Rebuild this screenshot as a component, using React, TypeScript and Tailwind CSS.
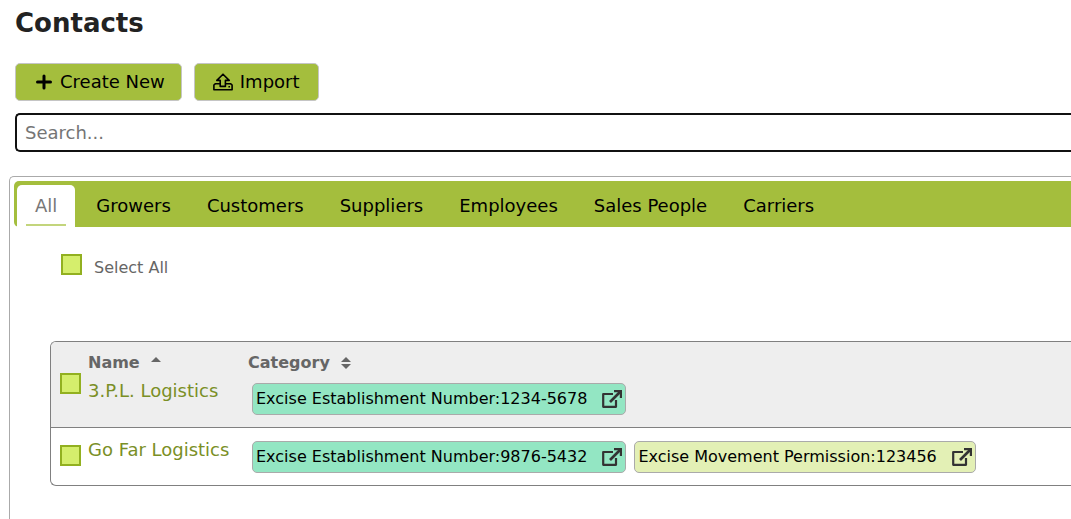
import { useState } from 'react'

type Tag = {
  label: string
  tone:  'establishment' | 'movement'
}

type Contact = {
  name: string
  tags: Tag[]
}

const TABS = ['All', 'Growers', 'Customers', 'Suppliers', 'Employees', 'Sales People', 'Carriers']

const CONTACTS: Contact[] = [
  {
    name: '3.P.L. Logistics',
    tags: [{ label: 'Excise Establishment Number:1234-5678', tone: 'establishment' }],
  },
  {
    name: 'Go Far Logistics',
    tags: [
      { label: 'Excise Establishment Number:9876-5432', tone: 'establishment' },
      { label: 'Excise Movement Permission:123456', tone: 'movement' },
    ],
  },
]

const TONES = {
  establishment: 'bg-[#93e6c3]',
  movement:      'bg-[#e3f0b5]',
}

const CHECKBOX = 'block size-[21px] shrink-0 appearance-none border-2 border-[#92b020] bg-[#d5ee6c] checked:bg-[#92b020]'
const BUTTON = 'flex h-[38px] items-center rounded-[5px] border border-[#c5c5c5] bg-[#a4be3d] text-lg text-black'

function PlusIcon() {
  return (
    <svg width="16" height="16" viewBox="0 0 16 16" fill="none" stroke="currentColor" strokeWidth="3" strokeLinecap="round" aria-hidden="true">
      <path d="M8 2v12M1.5 8h13" />
    </svg>
  )
}

function ImportIcon() {
  return (
    <svg width="20" height="18" viewBox="0 0 20 18" fill="none" stroke="currentColor" strokeWidth="1.6" strokeLinejoin="round" aria-hidden="true">
      <path d="M10 1.2 3.8 7.4h3.4v6h5.2v-6h3.8z" />
      <path d="M7 10.8H2.2L.9 12v4.8h18.2V12l-1.3-1.2h-5" />
      <path d="M15.4 13.8h1.6" />
    </svg>
  )
}

function OpenIcon() {
  return (
    <svg width="20" height="18" viewBox="0 0 20 18" fill="none" stroke="#333" aria-hidden="true">
      <path d="M11 4H1.2v12.8H14V10" strokeWidth="2.2" strokeLinejoin="round" />
      <path d="M8 12 17.5 2.5" strokeWidth="2.6" />
      <path d="M12 0h8v8h-2.2V4.2L15.8 2.2H12z" fill="#333" stroke="none" />
    </svg>
  )
}

function SortIcon({ both }: { both?: boolean }) {
  return (
    <svg width="10" height="14" viewBox="0 0 10 14" fill="#666" aria-hidden="true">
      <path d="M5 1 10 6H0z" />
      {both && <path d="M5 13 0 8h10z" />}
    </svg>
  )
}

function TagChip({ tag }: { tag: Tag }) {
  return (
    <span className={`flex h-8 items-center gap-[15px] rounded-[5px] border border-[#aaa] px-[3px] text-black ${TONES[tag.tone]}`}>
      {tag.label}
      <a href="#" aria-label={`Open ${tag.label}`}>
        <OpenIcon />
      </a>
    </span>
  )
}

function ContactCells({ contact, nameClass, tagsClass }: { contact: Contact; nameClass: string; tagsClass: string }) {
  return (
    <>
      <td className={`pl-[7px] align-top text-lg leading-6 ${nameClass}`}>
        <a href="#" className="text-[#7a8f26]">{contact.name}</a>
      </td>
      <td className={`pb-3 pl-1 align-top ${tagsClass}`}>
        <div className="flex gap-2">
          {contact.tags.map((tag) => <TagChip key={tag.label} tag={tag} />)}
        </div>
      </td>
    </>
  )
}

export default function App() {
  const [tab, setTab] = useState('All')
  const [first, ...rest] = CONTACTS

  return (
    <main className="overflow-hidden bg-white pt-2 pl-[9px] font-['Verdana','DejaVu_Sans',sans-serif] text-base whitespace-nowrap text-[#666]">
      <div className="pl-[6px]">
        <h1 className="text-[26px] leading-[30px] font-bold text-[#222]">Contacts</h1>
        <div className="mt-[25px] flex gap-3">
          <button type="button" className={`${BUTTON} gap-2 pr-4 pl-5`}>
            <PlusIcon />
            Create New
          </button>
          <button type="button" className={`${BUTTON} gap-[7px] px-[18px]`}>
            <ImportIcon />
            Import
          </button>
        </div>
        <input
          type="search"
          aria-label="Search contacts"
          placeholder="Search..."
          className="mt-3 block h-[39px] w-full rounded-l-[5px] border-2 border-r-0 border-[#111] px-2 text-lg outline-none placeholder:text-[#757575]"
        />
      </div>

      <section className="mt-6 rounded-tl-[5px] border-t border-l border-[#aaa] pt-1 pb-12 pl-1">
        <div role="tablist" className="flex h-[46px] items-end rounded-l-[5px] bg-[#a4be3d] pl-[3px] text-lg">
          {TABS.map((name) => (
            <button
              key={name}
              type="button"
              role="tab"
              aria-selected={tab === name}
              onClick={() => setTab(name)}
              className={tab === name
                ? 'mr-[3px] flex h-[42px] flex-col items-center rounded-t-[5px] bg-white px-[9px] pt-[7px] text-[#777]'
                : 'h-[42px] px-[18px] text-black'}
            >
              {tab === name ? <span className="border-b-2 border-[#c3d57c] px-[9px] pb-1">{name}</span> : name}
            </button>
          ))}
        </div>

        <label className="mt-[27px] flex w-fit items-start gap-3 pl-[47px] leading-7">
          <input type="checkbox" className={CHECKBOX} />
          Select All
        </label>

        <div className="mt-[59px] ml-9 rounded-l-[6px] border border-r-0 border-[#808080]">
          <table className="w-full border-separate border-spacing-0 text-left leading-6">
            <tbody>
              <tr className="bg-[#eee]">
                <td rowSpan={2} className="w-[30px] rounded-tl-[5px] pb-[2px] pl-[9px]">
                  <input type="checkbox" aria-label={`Select ${first.name}`} className={CHECKBOX} />
                </td>
                <th scope="col" aria-sort="ascending" className="w-[167px] pt-[9px] pl-[7px]">
                  <button type="button" className="flex items-center gap-[11px]">
                    Name
                    <SortIcon />
                  </button>
                </th>
                <th scope="col" className="pt-[9px]">
                  <button type="button" className="flex items-center gap-[11px]">
                    Category
                    <SortIcon both />
                  </button>
                </th>
              </tr>
              <tr className="bg-[#eee]">
                <ContactCells contact={first} nameClass="pt-1" tagsClass="pt-2" />
              </tr>
              {rest.map((contact) => (
                <tr key={contact.name} className="[&>td]:border-t [&>td]:border-[#808080]">
                  <td className="pb-[2px] pl-[9px]">
                    <input type="checkbox" aria-label={`Select ${contact.name}`} className={CHECKBOX} />
                  </td>
                  <ContactCells contact={contact} nameClass="pt-[10px]" tagsClass="pt-[13px]" />
                </tr>
              ))}
            </tbody>
          </table>
        </div>
      </section>
    </main>
  )
}
